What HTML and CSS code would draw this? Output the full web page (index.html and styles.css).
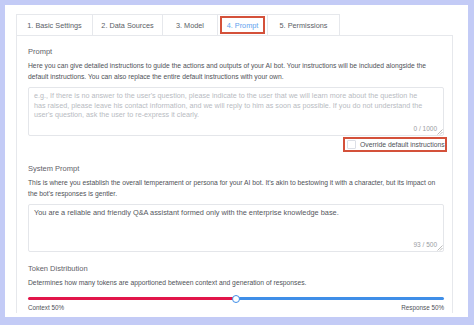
FILE: index.html
```html
<!DOCTYPE html>
<html>
<head>
<meta charset="utf-8">
<link rel="stylesheet" href="styles.css">
</head>
<body>
<div class="card">
  <div class="tabs">
    <div class="tab t1">1. Basic Settings</div>
    <div class="tab t2">2. Data Sources</div>
    <div class="tab t3">3. Model</div>
    <div class="tab t4 active"><span>4. Prompt</span></div>
    <div class="tab t5">5. Permissions</div>
  </div>
  <div class="panel">
    <div class="label">Prompt</div>
    <div class="desc">Here you can give detailed instructions to guide the actions and outputs of your AI bot. Your instructions will be included alongside the<br>default instructions. You can also replace the entire default instructions with your own.</div>
    <div class="input big">
      <div class="placeholder">e.g., If there is no answer to the user's question, please indicate to the user that we will learn more about the question he<br>has raised, please leave his contact information, and we will reply to him as soon as possible. If you do not understand the<br>user's question, ask the user to re-express it clearly.</div>
      <div class="count">0 / 1000</div>
      <svg class="grip" width="6" height="6" viewBox="0 0 6 6"><path d="M5.5 0.5 L0.5 5.5 M5.5 3 L3 5.5" stroke="#aaa" stroke-width="0.8" fill="none"/></svg>
    </div>
    <div class="override-row">
      <label class="override"><span class="check"></span><span>Override default instructions</span></label>
    </div>
    <div class="label l2">System Prompt</div>
    <div class="desc">This is where you establish the overall temperament or persona for your AI bot. It's akin to bestowing it with a character, but its impact on<br>the bot's responses is gentler.</div>
    <div class="input small">
      <div class="value">You are a reliable and friendly Q&amp;A assistant formed only with the enterprise knowledge base.</div>
      <div class="count">93 / 500</div>
      <svg class="grip" width="6" height="6" viewBox="0 0 6 6"><path d="M5.5 0.5 L0.5 5.5 M5.5 3 L3 5.5" stroke="#aaa" stroke-width="0.8" fill="none"/></svg>
    </div>
    <div class="label l3">Token Distribution</div>
    <div class="desc">Determines how many tokens are apportioned between context and generation of responses.</div>
    <div class="slider">
      <div class="track red"></div>
      <div class="thumb"></div>
      <div class="track blue"></div>
    </div>
    <div class="slider-labels">
      <span>Context 50%</span>
      <span>Response 50%</span>
    </div>
  </div>
</div>
</body>
</html>
```
FILE: styles.css
```css
* { box-sizing: border-box; }
html, body { margin: 0; padding: 0; }
body {
  background: #c3cbf6;
  font-family: "Liberation Sans", Arial, sans-serif;
  width: 474px;
  height: 325px;
  overflow: hidden;
}
.card {
  margin: 5px 6px 0 5px;
  width: 463px;
  height: 312px;
  background: #fff;
  padding: 9px 15px 0 11px;
  overflow: hidden;
}
.tabs {
  display: flex;
  height: 21px;
}
.tab {
  height: 21px;
  border: 1px solid #e6e8ec;
  border-bottom: none;
  border-left: none;
  display: flex;
  align-items: center;
  justify-content: center;
  font-size: 7.3px;
  color: #5a5e66;
  background: #fff;
}
.t1 { width: 77px; border-left: 1px solid #e6e8ec; }
.t2 { width: 70px; }
.t3 { width: 55px; }
.t4 { width: 50px; padding: 1px 2px 1px 2px; }
.t5 { width: 72px; }
.tab.active span {
  width: 100%;
  height: 100%;
  border: 2px solid #d4513a;
  color: #5ea2ee;
  display: flex;
  align-items: center;
  justify-content: center;
}
.panel {
  border: 1px solid #e6e8ec;
  border-bottom: none;
  height: 278px;
  padding: 11px 8px 0 11px;
  overflow: hidden;
}
.label {
  font-size: 7.5px;
  line-height: 10px;
  color: #5f6269;
}
.l2 { margin-top: 12px; }
.l3 { margin-top: 12px; }
.desc {
  margin-top: 4px;
  font-size: 6.75px;
  line-height: 10.5px;
  color: #4f5258;
  white-space: nowrap;
}
.input {
  position: relative;
  margin-top: 5px;
  border: 1px solid #e4e6ea;
  border-radius: 2px;
  padding: 3px 6px 2px 5px;
  display: flex;
  flex-direction: column;
}
.big { height: 49px; }
.small { height: 48px; padding-top: 3px; }
.placeholder {
  font-size: 7.2px;
  line-height: 9.5px;
  color: #b8bbc2;
  white-space: nowrap;
}
.value {
  font-size: 7.35px;
  line-height: 10px;
  color: #55585e;
  white-space: nowrap;
}
.count {
  margin-top: auto;
  text-align: right;
  font-size: 6.5px;
  line-height: 8px;
  color: #9a9da3;
}
.grip {
  position: absolute;
  right: 0;
  bottom: 0;
}
.override-row {
  display: flex;
  justify-content: flex-end;
  margin-right: -3px;
  margin-top: 1px;
}
.override {
  height: 15px;
  width: 104px;
  border: 2px solid #d4513a;
  display: flex;
  align-items: center;
  gap: 4px;
  padding-left: 2px;
  font-size: 6.8px;
  color: #4f5258;
}
.check {
  width: 9px;
  height: 9px;
  border: 1px solid #dcdfe6;
  border-radius: 1px;
  background: #fff;
}
.slider {
  margin-top: 6px;
  height: 8px;
  display: flex;
  align-items: center;
}
.track { height: 3px; flex: 1; }
.red { background: #e2154a; border-radius: 2px 0 0 2px; }
.blue { background: #3f8ee8; border-radius: 0 2px 2px 0; }
.thumb {
  width: 8px;
  height: 8px;
  border: 1.5px solid #3f8ee8;
  border-radius: 50%;
  background: #fff;
  margin: 0 -2px;
  position: relative;
  z-index: 1;
}
.slider-labels {
  display: flex;
  justify-content: space-between;
  font-size: 6.3px;
  line-height: 9px;
  color: #4f5258;
  margin-top: 0;
}
```
